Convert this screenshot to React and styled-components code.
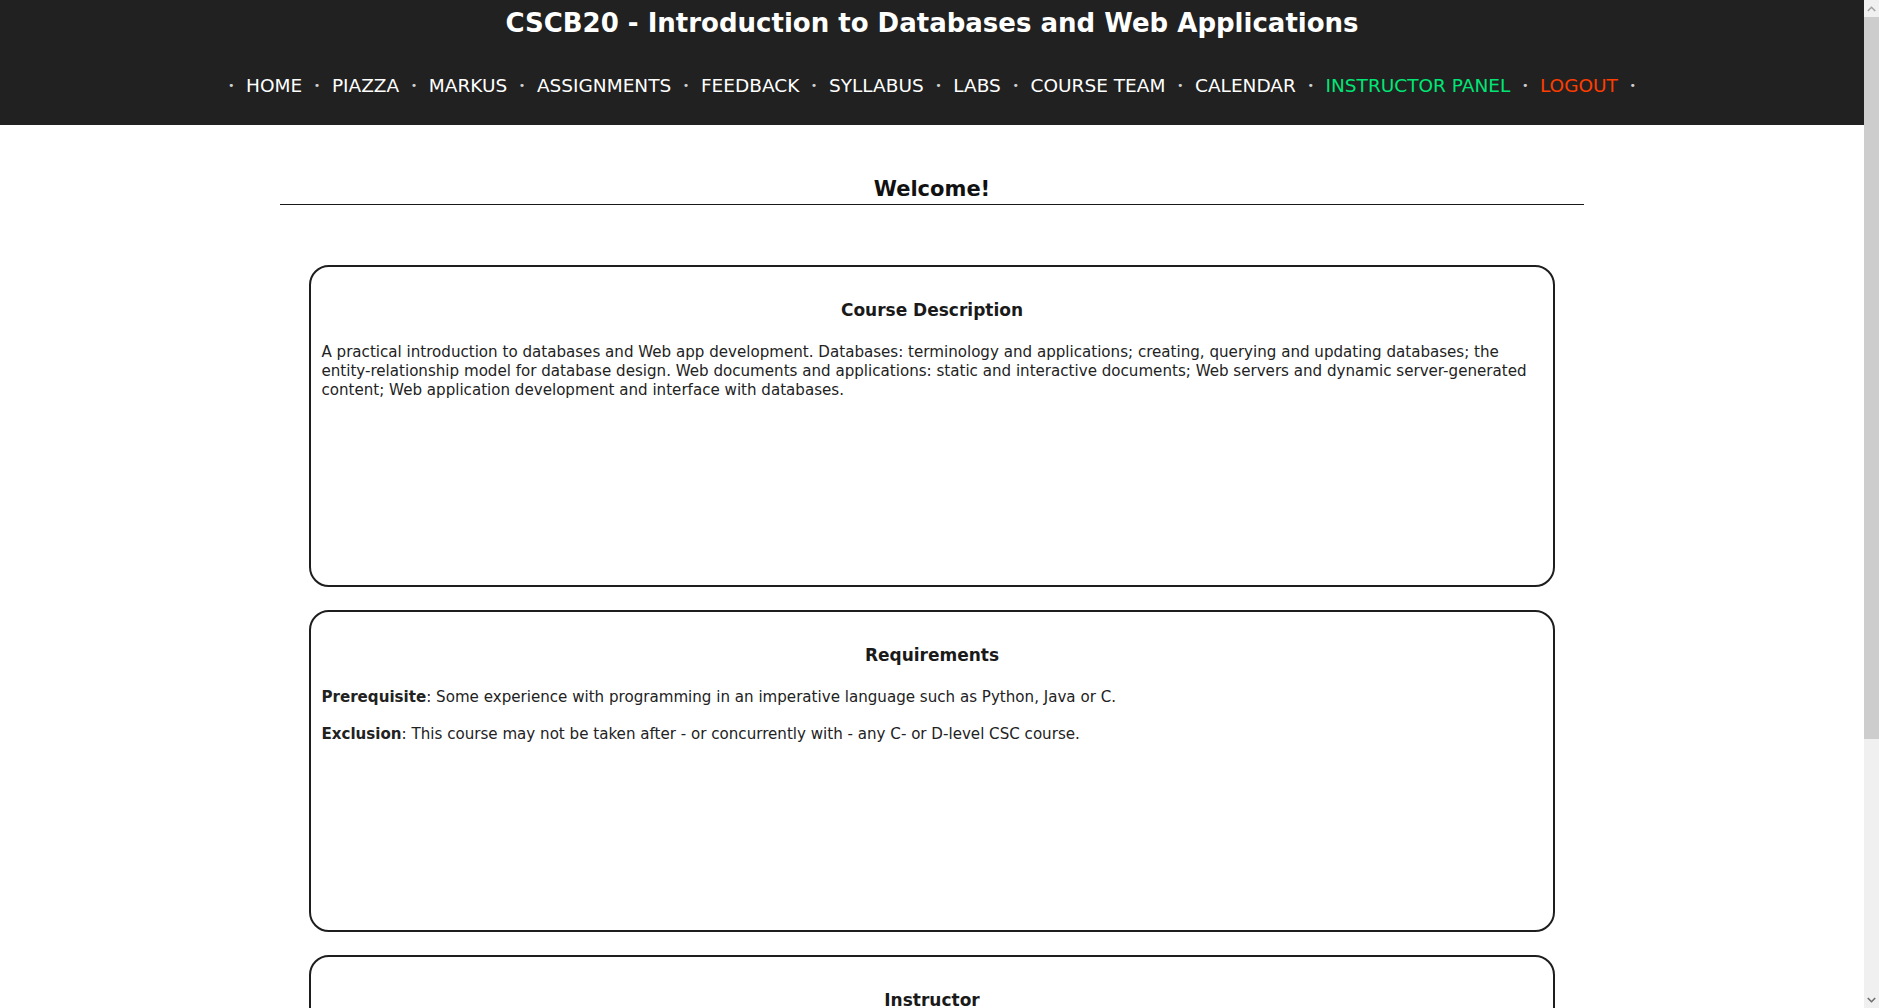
import React from 'react'
import styled, { createGlobalStyle } from 'styled-components'

const navLinks = [
  { label: 'HOME' },
  { label: 'PIAZZA' },
  { label: 'MARKUS' },
  { label: 'ASSIGNMENTS' },
  { label: 'FEEDBACK' },
  { label: 'SYLLABUS' },
  { label: 'LABS' },
  { label: 'COURSE TEAM' },
  { label: 'CALENDAR' },
  { label: 'INSTRUCTOR PANEL', tone: 'admin' },
  { label: 'LOGOUT', tone: 'logout' },
]

const toneColors = {
  admin: '#00e676',
  logout: '#ff3d00',
}

const GlobalStyle = createGlobalStyle`
  html, body {
    margin: 0;
    padding: 0;
    background: #fff;
  }
  body {
    font-family: "DejaVu Sans", "Liberation Sans", sans-serif;
    color: #222;
  }
  * {
    box-sizing: border-box;
  }
`

export default function App() {
  return (
    <Shell>
      <GlobalStyle />
      <Page>
        <Header>
          <Title>CSCB20 - Introduction to Databases and Web Applications</Title>
          <Nav>
            {navLinks.map((link) => (
              <React.Fragment key={link.label}>
                <Bullet>•</Bullet>
                <NavLink href="#" $tone={link.tone}>{link.label}</NavLink>
              </React.Fragment>
            ))}
            <Bullet>•</Bullet>
          </Nav>
        </Header>

        <Main>
          <Welcome>Welcome!</Welcome>

          <Card>
            <CardTitle>Course Description</CardTitle>
            <CardText>
              A practical introduction to databases and Web app development. Databases: terminology and
              applications; creating, querying and updating databases; the entity-relationship model for
              database design. Web documents and applications: static and interactive documents; Web servers
              and dynamic server-generated content; Web application development and interface with databases.
            </CardText>
          </Card>

          <Card>
            <CardTitle>Requirements</CardTitle>
            <CardText $spaced>
              <b>Prerequisite</b>: Some experience with programming in an imperative language such as Python, Java or C.
            </CardText>
            <CardText $spaced>
              <b>Exclusion</b>: This course may not be taken after - or concurrently with - any C- or D-level CSC course.
            </CardText>
          </Card>

          <Card>
            <CardTitle>Instructor</CardTitle>
            <CardText>
              <b>Name</b>: Dr. Abbas Attarwala
            </CardText>
          </Card>
        </Main>
      </Page>

      {/* fake browser scrollbar, the screenshot has one */}
      <Scrollbar>
        <ScrollButton>
          <svg width="9" height="6" viewBox="0 0 9 6">
            <path d="M0.8 5 L4.5 1.3 L8.2 5" fill="none" stroke="#a3a3a3" strokeWidth="1.6" />
          </svg>
        </ScrollButton>
        <ScrollTrack>
          <ScrollThumb />
        </ScrollTrack>
        <ScrollButton>
          <svg width="9" height="6" viewBox="0 0 9 6">
            <path d="M0.8 1 L4.5 4.7 L8.2 1" fill="none" stroke="#6e6e6e" strokeWidth="1.6" />
          </svg>
        </ScrollButton>
      </Scrollbar>
    </Shell>
  )
}

const Shell = styled.div`
  display: flex;
  align-items: flex-start;
`

const Page = styled.div`
  flex: 1;
  min-width: 0;
`

const Scrollbar = styled.div`
  position: sticky;
  top: 0;
  width: 15px;
  height: 100vh;
  flex-shrink: 0;
  background: #f0f0f0;
  display: flex;
  flex-direction: column;
`

const ScrollButton = styled.div`
  height: 17px;
  display: flex;
  align-items: center;
  justify-content: center;
  flex-shrink: 0;
`

const ScrollTrack = styled.div`
  flex: 1;
  padding: 0 0 252px;
  display: flex;
  flex-direction: column;
`

const ScrollThumb = styled.div`
  flex: 1;
  background: #cdcdcd;
`

const Header = styled.header`
  background: #212121;
  height: 125px;
  padding-top: 6px;
  display: flex;
  flex-direction: column;
  align-items: center;
`

const Title = styled.h1`
  margin: 0;
  color: #fff;
  font-size: 26px;
  line-height: 34px;
  font-weight: bold;
`

const Nav = styled.nav`
  margin-top: 34px;
  display: flex;
  align-items: center;
  gap: 11.6px;
  height: 24px;
`

const Bullet = styled.span`
  color: #cfcfcf;
  font-size: 11px;
  line-height: 24px;
`

const NavLink = styled.a`
  color: ${(p) => toneColors[p.$tone] || '#fff'};
  text-decoration: none;
  font-size: 18.5px;
  line-height: 24px;
`

const Main = styled.main`
  padding-top: 51px;
  padding-bottom: 80px;
`

const Welcome = styled.h2`
  width: 70%;
  margin: 0 auto 60px;
  padding-bottom: 1px;
  border-bottom: 1px solid #1a1a1a;
  text-align: center;
  font-size: 21px;
  line-height: 27px;
  color: #111;
`

const Card = styled.section`
  width: 66.8%;
  min-height: 322px;
  margin: 0 auto 23px;
  padding: 32px 10px 10px;
  border: 2px solid #1e1e1e;
  border-radius: 20px;
`

const CardTitle = styled.h3`
  margin: 0 0 21px;
  text-align: center;
  font-size: 17px;
  line-height: 23px;
  color: #1a1a1a;
`

const CardText = styled.p`
  margin: 0 0 ${(p) => (p.$spaced ? '18px' : '0')};
  font-size: 15.1px;
  line-height: 19px;
  color: #222;
`
